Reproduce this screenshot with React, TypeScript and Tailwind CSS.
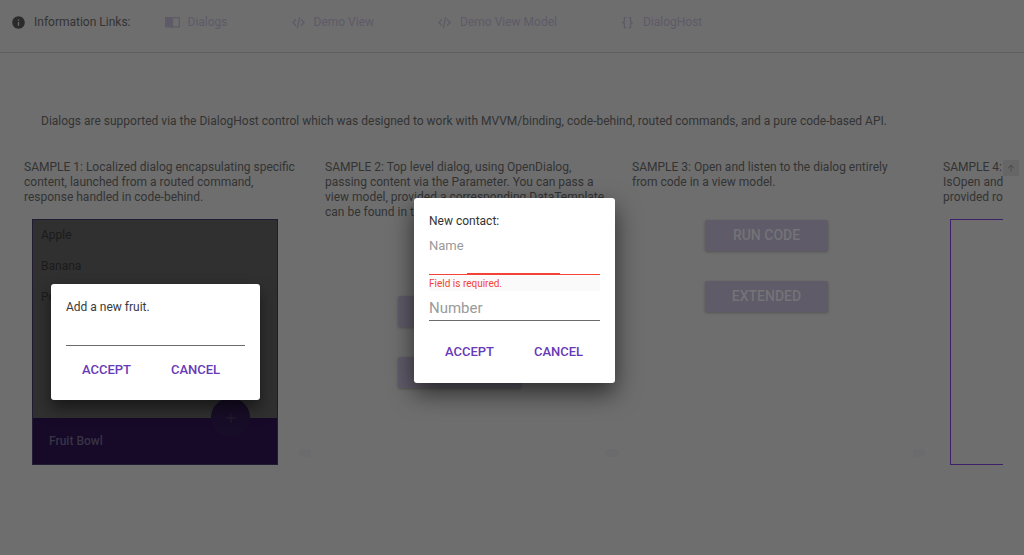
import { useState } from 'react'
import type { ReactNode } from 'react'
import { MdAdd, MdArrowUpward, MdInfo } from 'react-icons/md'

const iconPaths = {
  book: 'M0,3H11L12,4L13,3H24V20H13L12,22L11,20H0ZM13,5V18H22V5Z',
  xml: 'M12.89,3L14.85,3.4L11.11,21L9.15,20.6L12.89,3M19.59,12L16,8.41V5.58L22.42,12L16,18.41V15.58L19.59,12M1.58,12L8,5.58V8.41L4.41,12L8,15.58V18.41L1.58,12Z',
  braces:
    'M8,3A2,2 0 0,0 6,5V9A2,2 0 0,1 4,11H3V13H4A2,2 0 0,1 6,15V19A2,2 0 0,0 8,21H10V19H8V14A2,2 0 0,0 6,12A2,2 0 0,0 8,10V5H10V3M16,3A2,2 0 0,1 18,5V9A2,2 0 0,0 20,11H21V13H20A2,2 0 0,0 18,15V19A2,2 0 0,1 16,21H14V19H16V14A2,2 0 0,1 18,12A2,2 0 0,1 16,10V5H14V3H16Z',
}

const links: { label: string; icon: keyof typeof iconPaths }[] = [
  { label: 'Dialogs', icon: 'book' },
  { label: 'Demo View', icon: 'xml' },
  { label: 'Demo View Model', icon: 'xml' },
  { label: 'DialogHost', icon: 'braces' },
]

const fruits = ['Apple', 'Banana', 'Pear']

function Sample({ className, children }: { className: string; children: ReactNode }) {
  return <section className={`w-[307px] shrink-0 h-[305px] ${className}`}>{children}</section>
}

function RaisedButton({ label, children }: { label?: string; children?: ReactNode }) {
  return (
    <button
      aria-label={label}
      className="flex h-[31px] w-[123px] items-center justify-center rounded-xs bg-[#5f5b69] text-[14px] font-medium text-[#747377] shadow-[0_1px_3px_rgba(0,0,0,0.25)]"
    >
      {children}
    </button>
  )
}

// small badge in the bottom right corner of a sample
function Badge() {
  return <span className="absolute right-1 bottom-2 h-2 w-3 rounded-full bg-[#6b6a6d]" />
}

function DialogActions() {
  return (
    <div className="flex gap-2">
      <button type="button" className="h-[30px] w-[81px] text-[13px] font-medium text-[#673ab7]">
        ACCEPT
      </button>
      <button type="button" className="h-[30px] w-[81px] text-[13px] font-medium text-[#673ab7]">
        CANCEL
      </button>
    </div>
  )
}

export default function App() {
  const [fruit, setFruit] = useState('')
  const [name, setName] = useState('')
  const [number, setNumber] = useState('')

  return (
    <div className="relative min-h-screen overflow-hidden bg-[#6e6e6e] font-['Roboto',sans-serif] text-[12px] leading-[15px] text-[#333333]">
      {/* Links */}
      <header className="flex h-[53px] items-start border-b border-[#5f5f5f] pt-[15px] pl-[11px]">
        <MdInfo className="size-[15px] text-[#2b2b2b]" />
        <span className="ml-2">Information Links:</span>
        <nav className="ml-[34px] flex gap-[63px] text-[#5e5a68]">
          {links.map((link) => (
            <a key={link.label} href="#" className="flex items-center gap-2">
              <svg viewBox="0 0 24 24" className="size-[15px]" fill="currentColor" fillRule="evenodd">
                <path d={iconPaths[link.icon]} />
              </svg>
              {link.label}
            </a>
          ))}
        </nav>
      </header>

      <main className="pt-[61px]">
        <p className="pl-[41px]">
          Dialogs are supported via the DialogHost control which was designed to work with MVVM/binding, code-behind,
          routed commands, and a pure code-based API.
        </p>

        <div className="mt-[31px] flex items-start">
          <div className="flex min-w-0 flex-1 overflow-hidden pl-2">
            <Sample className="relative pl-4">
              <p className="h-[59px] w-[275px]">
                SAMPLE 1: Localized dialog encapsulating specific content, launched from a routed command, response
                handled in code-behind.
              </p>
              <div className="relative ml-2 flex h-[246px] w-[246px] flex-col border border-[#211c33] bg-[#303030] text-[#1b1b1b]">
                <ul>
                  {fruits.map((item) => (
                    <li key={item} className="flex h-[31px] items-center pl-2">
                      {item}
                    </li>
                  ))}
                </ul>
                <div className="mt-auto flex h-[46px] items-center bg-[#160a28] pl-4 font-medium text-[#393346]">
                  Fruit Bowl
                </div>
                <button
                  aria-label="Add fruit"
                  className="absolute right-[27px] bottom-[27px] flex size-[39px] items-center justify-center rounded-full bg-[#180d28] text-[#221b2c]"
                >
                  <MdAdd className="size-4" />
                </button>
                <form className="absolute top-16 left-[18px] flex h-[116px] w-[209px] flex-col rounded-[3px] bg-white px-[15px] pt-4 text-[#3a3a3a] shadow-[0_8px_16px_rgba(0,0,0,0.5)]">
                  <label htmlFor="fruit">Add a new fruit.</label>
                  <input
                    id="fruit"
                    value={fruit}
                    onChange={(e) => setFruit(e.target.value)}
                    className="mt-[7px] h-6 border-b border-[#6b6b6b] outline-none"
                  />
                  <div className="mt-2">
                    <DialogActions />
                  </div>
                </form>
              </div>
              <Badge />
            </Sample>

            <Sample className="relative pl-[10px]">
              <p className="w-[285px]">
                SAMPLE 2: Top level dialog, using OpenDialog, passing content via the Parameter. You can pass a view
                model, provided a corresponding DataTemplate can be found in the scope.
              </p>
              <div className="mt-[76px] ml-[73px] flex flex-col gap-[30px]">
                <RaisedButton label="Pass view" />
                <RaisedButton label="Pass view model" />
              </div>
              <Badge />
            </Sample>

            <Sample className="relative pl-[10px]">
              <p className="h-[60px] w-[275px]">
                SAMPLE 3: Open and listen to the dialog entirely from code in a view model.
              </p>
              <div className="ml-[73px] flex flex-col gap-[30px]">
                <RaisedButton>RUN CODE</RaisedButton>
                <RaisedButton>EXTENDED</RaisedButton>
              </div>
              <Badge />
            </Sample>

            <Sample className="pl-[14px]">
              <p className="h-[59px] whitespace-nowrap">
                SAMPLE 4:
                <br />
                IsOpen and
                <br />
                provided ro
              </p>
              <div className="ml-[7px] h-[246px] w-[246px] border border-[#3c2168]" />
            </Sample>
          </div>
          <div className="w-[21px] shrink-0">
            <button aria-label="Scroll up" className="flex size-4 items-center justify-center bg-[#666666] text-[#4a4a4a]">
              <MdArrowUpward className="size-[10px]" />
            </button>
          </div>
        </div>
      </main>

      {/* New contact dialog */}
      <div className="absolute inset-0 flex items-center justify-center pt-[26px] pl-[5px]">
        <form className="flex h-[185px] w-[201px] flex-col rounded-[3px] bg-white px-[15px] pt-4 shadow-[0_10px_24px_rgba(0,0,0,0.6)]">
          <h2>New contact:</h2>
          <label htmlFor="name" className="mt-[9px] text-[13px] text-[#9a9a9a]">
            Name
          </label>
          <div className="relative">
            <input
              id="name"
              value={name}
              onChange={(e) => setName(e.target.value)}
              aria-invalid="true"
              aria-describedby="name-error"
              className="block h-[22px] w-full border-b border-[#f44336] outline-none"
            />
            <span className="absolute bottom-0 left-[38px] h-[2px] w-[93px] bg-[#f44336]" />
          </div>
          <p id="name-error" className="mt-px bg-[#fafafa] text-[10px] text-[#f44336]">
            Field is required.
          </p>
          <input
            aria-label="Number"
            placeholder="Number"
            value={number}
            onChange={(e) => setNumber(e.target.value)}
            className="mt-1 h-[26px] border-b border-[#6b6b6b] text-[15px] outline-none placeholder:text-[#9a9a9a]"
          />
          <div className="mt-[15px]">
            <DialogActions />
          </div>
        </form>
      </div>
    </div>
  )
}
